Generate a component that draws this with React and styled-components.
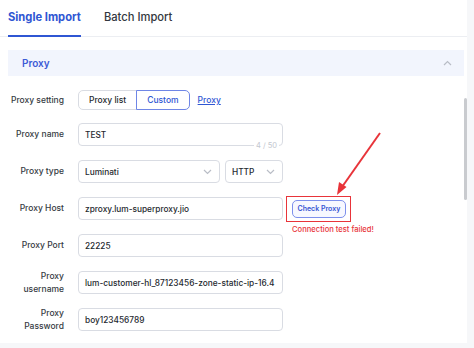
import React from "react";
import styled, { createGlobalStyle } from "styled-components";

const COLORS = {
  blue: "#2f56d3",
  text: "#25292f",
  label: "#363b43",
  border: "#d9dce3",
  muted: "#c3c7cf",
  red: "#e8343a",
};

const GlobalStyle = createGlobalStyle`
  html, body {
    margin: 0;
    padding: 0;
    background: #f6f7f9;
  }
  body {
    font-family: Inter, "Open Sans", "Liberation Sans", sans-serif;
    color: ${COLORS.text};
  }
`;

const FIELDS = [
  { label: "Proxy Port", value: "22225" },
  { label: "Proxy username", value: "lum-customer-hl_87123456-zone-static-ip-16.4" },
  { label: "Proxy Password", value: "boy123456789" },
];

const Chevron = ({ up }) => (
  <svg width="9" height="6" viewBox="0 0 9 6">
    <path
      d={up ? "M1 5 L4.5 1.5 L8 5" : "M1 1 L4.5 4.5 L8 1"}
      fill="none"
      stroke="#b9bdc6"
      strokeWidth="1.2"
    />
  </svg>
);

const App = () => {
  return (
    <Page>
      <GlobalStyle />
      <Panel>
        <Tabs>
          <Tab active>Single Import</Tab>
          <Tab>Batch Import</Tab>
        </Tabs>
        <SectionHeader>
          <span>Proxy</span>
          <Chevron up />
        </SectionHeader>
        <Form>
          <Row short>
            <Label>Proxy setting</Label>
            <Segmented>
              <Segment>Proxy list</Segment>
              <Segment selected>Custom</Segment>
            </Segmented>
            <Link>Proxy</Link>
          </Row>
          <Row>
            <Label>Proxy name</Label>
            <InputBox>
              <Value>TEST</Value>
              <Counter>4 / 50</Counter>
            </InputBox>
          </Row>
          <Row>
            <Label>Proxy type</Label>
            <SelectBox width={142}>
              <Value>Luminati</Value>
              <Chevron />
            </SelectBox>
            <SelectBox width={58}>
              <Value>HTTP</Value>
              <Chevron />
            </SelectBox>
          </Row>
          <Row>
            <Label>Proxy Host</Label>
            <InputBox>
              <Value>zproxy.lum-superproxy.jio</Value>
            </InputBox>
            <CheckArea>
              <Highlight>
                <CheckButton>Check Proxy</CheckButton>
              </Highlight>
              <ErrorText>Connection test failed!</ErrorText>
            </CheckArea>
          </Row>
          {FIELDS.map((f) => (
            <Row key={f.label}>
              <Label>{f.label}</Label>
              <InputBox>
                <Value>{f.value}</Value>
              </InputBox>
            </Row>
          ))}
          <ScrollThumb />
          <Arrow width="60" height="70" viewBox="0 0 60 70">
            <line x1="52" y1="4" x2="14" y2="58" stroke={COLORS.red} strokeWidth="2" />
            <path d="M9 66 L11 53 L18.5 58 Z" fill={COLORS.red} />
          </Arrow>
        </Form>
      </Panel>
    </Page>
  );
};

const Page = styled.div`
  width: 474px;
  height: 348px;
  overflow: hidden;
  display: flex;
  background: #f6f7f9;
`;

const Panel = styled.div`
  width: 467px;
  height: 343px;
  background: #ffffff;
  display: flex;
  flex-direction: column;
`;

const Tabs = styled.div`
  display: flex;
  gap: 23px;
  padding: 0 8px;
  height: 36px;
  border-bottom: 1px solid #eceef2;
`;

const Tab = styled.div`
  font-size: 11.2px;
  font-weight: ${(p) => (p.active ? 700 : 500)};
  color: ${(p) => (p.active ? COLORS.blue : "#33373e")};
  padding-top: 10px;
  box-sizing: border-box;
  border-bottom: 2px solid ${(p) => (p.active ? COLORS.blue : "transparent")};
  margin-bottom: -1px;
`;

const SectionHeader = styled.div`
  margin: 13px 3px 0 8px;
  height: 26px;
  background: #f2f5fd;
  display: flex;
  align-items: center;
  justify-content: space-between;
  padding: 0 12px 0 14px;
  font-size: 10px;
  font-weight: 600;
  color: #3d5bd6;
`;

const Form = styled.div`
  position: relative;
  display: flex;
  flex-direction: column;
  gap: 14px;
  padding-top: 14px;
`;

const Row = styled.div`
  display: flex;
  align-items: center;
  gap: 5px;
  height: ${(p) => (p.short ? 20 : 23)}px;
  ${(p) => (p.short ? "margin-bottom: -1px;" : "")}
`;

const Label = styled.div`
  width: 58px;
  margin-left: 6px;
  margin-right: 9px;
  text-align: right;
  font-size: 8.5px;
  font-weight: 500;
  line-height: 12.5px;
  color: ${COLORS.label};
`;

const Segmented = styled.div`
  display: flex;
  height: 20px;
`;

const Segment = styled.div`
  display: flex;
  align-items: center;
  padding: 0 10px;
  font-size: 8.5px;
  font-weight: 500;
  color: ${(p) => (p.selected ? COLORS.blue : COLORS.text)};
  border: 1px solid ${(p) => (p.selected ? "#6f86e6" : COLORS.border)};
  border-radius: ${(p) => (p.selected ? "0 5px 5px 0" : "5px 0 0 5px")};
  ${(p) => (p.selected ? "margin-left: -1px;" : "")}
`;

const Link = styled.a`
  margin-left: 3px;
  font-size: 8.5px;
  font-weight: 500;
  color: ${COLORS.blue};
  text-decoration: underline;
`;

const InputBox = styled.div`
  position: relative;
  width: 205px;
  height: 23px;
  box-sizing: border-box;
  border: 1px solid ${COLORS.border};
  border-radius: 4px;
  display: flex;
  align-items: center;
  padding: 0 4px 0 6px;
`;

const Value = styled.div`
  font-size: 8.3px;
  font-weight: 500;
  color: ${COLORS.text};
  white-space: nowrap;
  overflow: hidden;
  flex: 1;
`;

const Counter = styled.span`
  position: absolute;
  right: 3px;
  bottom: -5px;
  background: #ffffff;
  padding: 0 2px;
  font-size: 7.5px;
  color: ${COLORS.muted};
`;

const SelectBox = styled.div`
  width: ${(p) => p.width}px;
  height: 23px;
  box-sizing: border-box;
  border: 1px solid ${COLORS.border};
  border-radius: 4px;
  display: flex;
  align-items: center;
  padding: 0 7px 0 6px;
`;

const CheckArea = styled.div`
  position: relative;
  margin-left: -2px;
`;

const Highlight = styled.div`
  border: 1.5px solid ${COLORS.red};
  padding: 3px 4px 3px 4.5px;
`;

const CheckButton = styled.div`
  height: 18px;
  box-sizing: border-box;
  padding: 0 5px;
  display: flex;
  align-items: center;
  border: 1px solid #7d90ec;
  border-radius: 5px;
  background: #f7f8ff;
  font-size: 7px;
  font-weight: 600;
  color: #3553d3;
`;

const ErrorText = styled.div`
  position: absolute;
  left: 6px;
  top: 29px;
  white-space: nowrap;
  font-size: 7.6px;
  font-weight: 500;
  color: ${COLORS.red};
`;

const ScrollThumb = styled.div`
  position: absolute;
  right: 0;
  top: 22px;
  width: 3px;
  height: 102px;
  border-radius: 2px;
  background: #c9cbcf;
`;

const Arrow = styled.svg`
  position: absolute;
  left: 328px;
  top: 53px;
`;

export default App;
